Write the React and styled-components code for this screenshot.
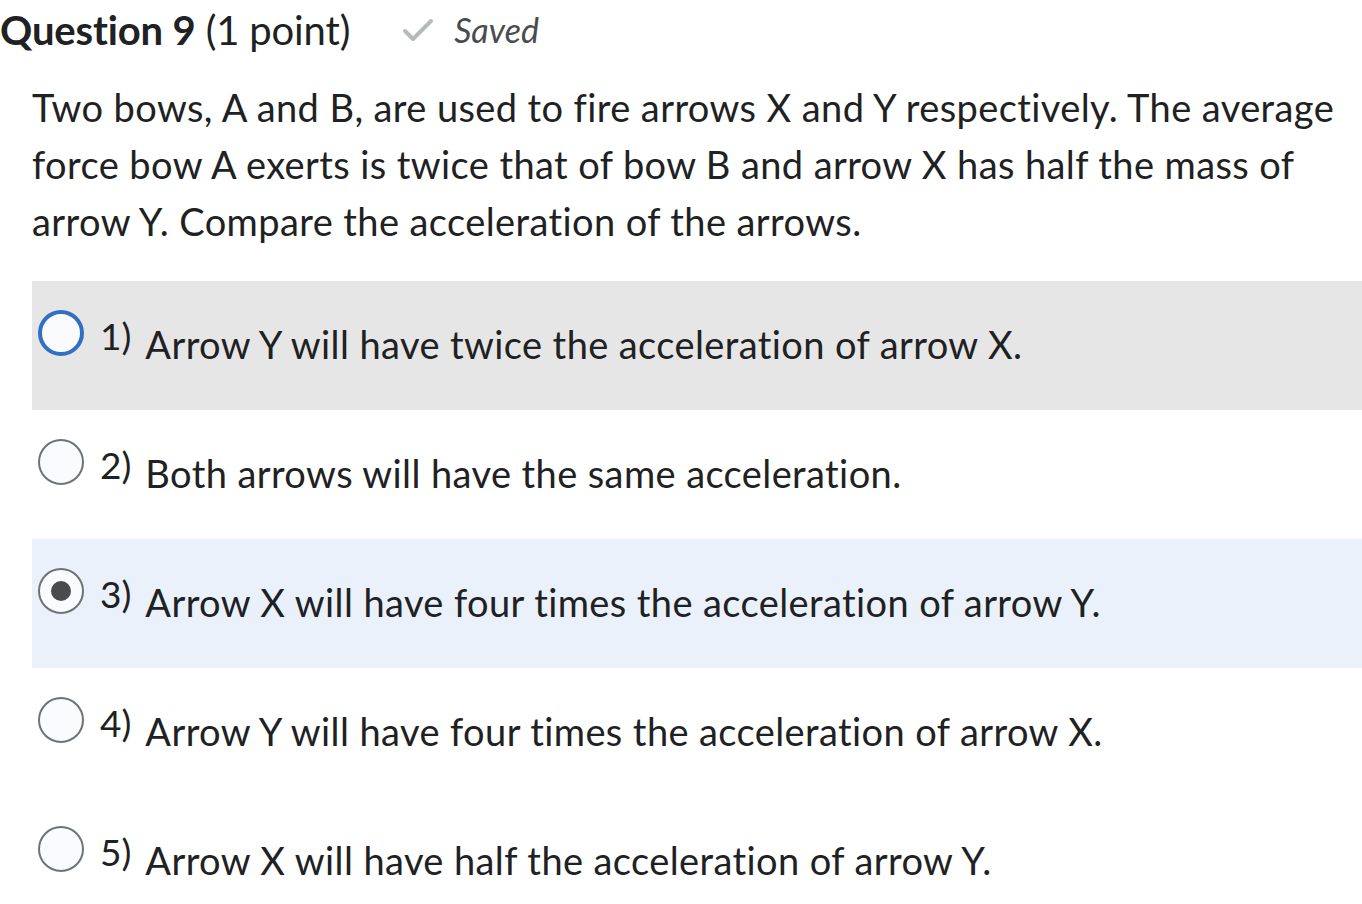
import React from 'react';
import styled, { createGlobalStyle } from 'styled-components';

const GlobalStyle = createGlobalStyle`
    body {
        margin: 0;
        background: #ffffff;
        font-family: Lato, "Noto Sans", sans-serif;
        color: #202122;
    }
`;

const answers = [
    { text: 'Arrow Y will have twice the acceleration of arrow X.', state: 'focus' },
    { text: 'Both arrows will have the same acceleration.', state: 'idle' },
    { text: 'Arrow X will have four times the acceleration of arrow Y.', state: 'checked' },
    { text: 'Arrow Y will have four times the acceleration of arrow X.', state: 'idle' },
    { text: 'Arrow X will have half the acceleration of arrow Y.', state: 'idle' },
];

export default function App() {
    return (
        <Root>
            <GlobalStyle />
            <Header>
                <Title>
                    <strong>Question 9</strong> (1 point)
                </Title>
                <SavedStatus>
                    <CheckIcon />
                    <SavedText>Saved</SavedText>
                </SavedStatus>
            </Header>
            <Prompt>
                Two bows, A and B, are used to fire arrows X and Y respectively. The average
                force bow A exerts is twice that of bow B and arrow X has half the mass of
                arrow Y. Compare the acceleration of the arrows.
            </Prompt>
            <Choices>
                {answers.map((answer, i) => (
                    <Choice key={i} state={answer.state}>
                        <Radio state={answer.state} />
                        <Number>{i + 1})</Number>
                        <AnswerText>{answer.text}</AnswerText>
                    </Choice>
                ))}
            </Choices>
        </Root>
    );
}

function CheckIcon() {
    return (
        <svg width="32" height="24" viewBox="0 0 32 24">
            <path d="M3 13 L11 21 L29 3" fill="none" stroke="#b5babd" strokeWidth="4" strokeLinecap="round" strokeLinejoin="round" />
        </svg>
    );
}

const Root = styled.div`
    width: 1362px;
    overflow: hidden;
`;

const Header = styled.div`
    display: flex;
    align-items: center;
    height: 59px;
`;

const Title = styled.h2`
    margin: 0;
    font-size: 40px;
    font-weight: 400;
    color: #202122;
    letter-spacing: -0.15px;

    strong {
        font-weight: 700;
    }
`;

const SavedStatus = styled.div`
    display: flex;
    align-items: center;
    margin-left: 52px;
    gap: 20px;
`;

const SavedText = styled.span`
    font-style: italic;
    font-size: 34px;
    color: #494c4e;
`;

const Prompt = styled.p`
    margin: 20px 0 0 32px;
    width: 1320px;
    font-size: 38px;
    line-height: 57px;
    letter-spacing: 0.4px;
    font-variant-ligatures: none;
    color: #202122;
`;

const Choices = styled.div`
    margin: 31px 0 0 32px;
    display: flex;
    flex-direction: column;
`;

const Choice = styled.div`
    display: flex;
    align-items: flex-start;
    height: 129px;
    box-sizing: border-box;
    padding: 29px 0 0 6px;
    background: ${props =>
        props.state === 'focus' ? '#e6e6e6' : props.state === 'checked' ? '#eaf1fb' : '#ffffff'};
`;

const Radio = styled.span`
    flex: none;
    width: 46px;
    height: 46px;
    box-sizing: border-box;
    border-radius: 50%;
    background: #f9fbff;
    border: ${props => (props.state === 'focus' ? '4px solid #2f70c0' : '2px solid #6e7376')};
    position: relative;

    &::after {
        content: '';
        display: ${props => (props.state === 'checked' ? 'block' : 'none')};
        position: absolute;
        left: 50%;
        top: 50%;
        width: 20px;
        height: 20px;
        margin: -10px 0 0 -10px;
        border-radius: 50%;
        background: #494c4e;
    }
`;

const Number = styled.span`
    margin: 6px 0 0 16px;
    font-size: 37px;
    line-height: 40px;
    color: #202122;
`;

const AnswerText = styled.span`
    margin: 14px 0 0 14px;
    font-size: 38px;
    line-height: 40px;
    letter-spacing: 0.4px;
    font-variant-ligatures: none;
    color: #202122;
`;
